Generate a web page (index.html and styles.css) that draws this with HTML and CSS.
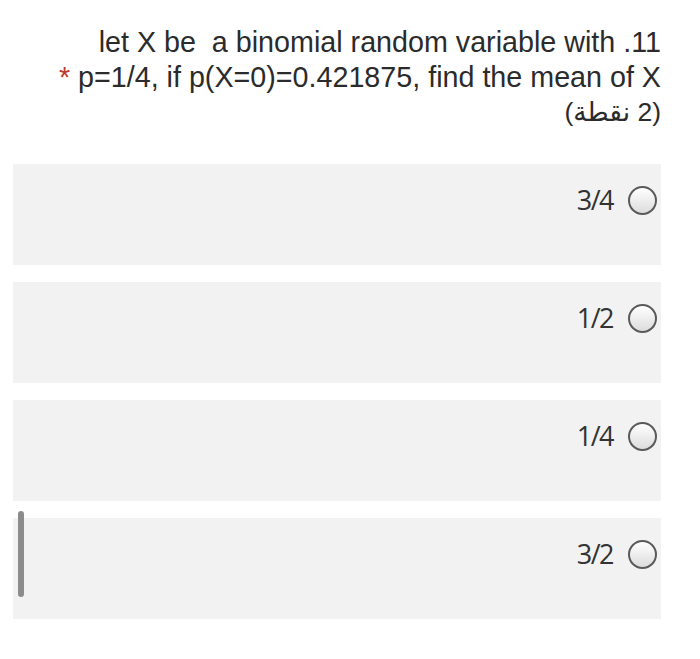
FILE: index.html
```html
<!DOCTYPE html>
<html lang="en">
<head>
<meta charset="utf-8">
<title>Question</title>
<link rel="stylesheet" href="styles.css">
</head>
<body>
<div class="page">
  <div class="question">
    <div class="q-line">let X be&nbsp; a binomial random variable with .11</div>
    <div class="q-line"><span class="req">*</span> p=1/4, if p(X=0)=0.421875, find the mean of X</div>
    <div class="q-line points" dir="rtl">(2 نقطة)</div>
  </div>
  <div class="options">
    <div class="option"><div class="opt-row"><span class="opt-label">3/4</span><span class="radio"></span></div></div>
    <div class="option"><div class="opt-row"><span class="opt-label">1/2</span><span class="radio"></span></div></div>
    <div class="option"><div class="opt-row"><span class="opt-label">1/4</span><span class="radio"></span></div></div>
    <div class="option"><div class="opt-row"><span class="opt-label">3/2</span><span class="radio"></span></div></div>
  </div>
  <div class="scrollbar"></div>
</div>
</body>
</html>
```

FILE: styles.css
```css
html, body {
  margin: 0;
  padding: 0;
  background: #ffffff;
}

.page {
  position: relative;
  width: 700px;
  height: 659px;
  box-sizing: border-box;
  padding: 25px 39px 0 13px;
}

.question {
  display: flex;
  flex-direction: column;
  align-items: flex-end;
  font-family: "Liberation Sans", "DejaVu Sans", Arial, sans-serif;
  font-size: 28.7px;
  line-height: 35px;
  color: #2b2b2b;
}

.q-line {
  white-space: nowrap;
}

.req {
  color: #c0392b;
}

.points {
  text-align: right;
  font-size: 26.5px;
}

.options {
  margin-top: 34px;
  display: flex;
  flex-direction: column;
  gap: 17px;
}

.option {
  height: 101px;
  background: #f2f2f2;
  box-sizing: border-box;
  padding: 20px 4px 0 0;
}

.opt-row {
  display: flex;
  justify-content: flex-end;
  align-items: center;
  gap: 15px;
  height: 32px;
}

.opt-label {
  font-family: "Open Sans", "Liberation Sans", sans-serif;
  font-size: 27px;
  color: #333333;
  line-height: 32px;
  letter-spacing: -1.5px;
}

.radio {
  width: 25px;
  height: 25px;
  border-radius: 50%;
  border: 2px solid #5a5a5a;
  background: linear-gradient(#ffffff, #dcdcdc);
}

.scrollbar {
  position: absolute;
  left: 18px;
  top: 511px;
  width: 6px;
  height: 86px;
  border-radius: 3px;
  background: #8c8c8c;
}
```
